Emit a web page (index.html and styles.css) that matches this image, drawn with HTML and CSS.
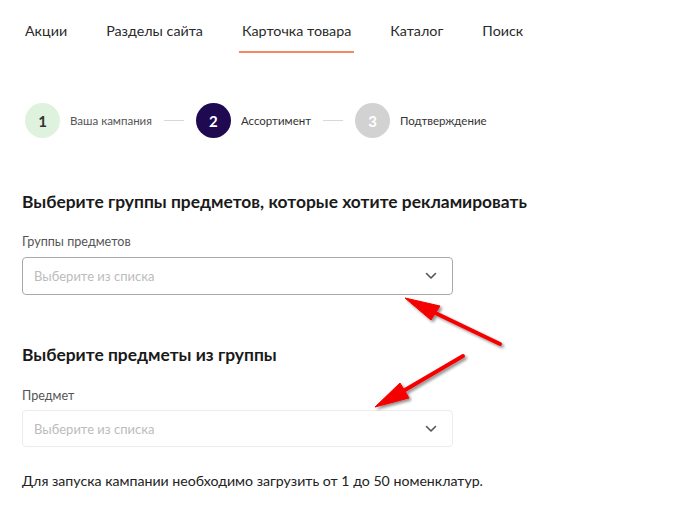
FILE: index.html
```html
<!DOCTYPE html>
<html lang="ru">
<head>
<meta charset="utf-8">
<link rel="stylesheet" href="styles.css">
</head>
<body>
<div class="page">
  <nav class="tabs">
    <span class="tab">Акции</span>
    <span class="tab">Разделы сайта</span>
    <span class="tab active">Карточка товара</span>
    <span class="tab">Каталог</span>
    <span class="tab">Поиск</span>
  </nav>

  <div class="steps">
    <div class="step">
      <span class="circle c1">1</span>
      <span class="step-label">Ваша кампания</span>
    </div>
    <span class="sep"></span>
    <div class="step">
      <span class="circle c2">2</span>
      <span class="step-label">Ассортимент</span>
    </div>
    <span class="sep"></span>
    <div class="step">
      <span class="circle c3">3</span>
      <span class="step-label">Подтверждение</span>
    </div>
  </div>

  <h2 class="title t1">Выберите группы предметов, которые хотите рекламировать</h2>
  <div class="label l1">Группы предметов</div>
  <div class="select">
    <span class="ph">Выберите из списка</span>
    <svg class="chev" width="12" height="8" viewBox="0 0 12 8"><path d="M1.5 1.5 L6 6 L10.5 1.5" fill="none" stroke="#555" stroke-width="1.6" stroke-linecap="round" stroke-linejoin="round"/></svg>
  </div>

  <h2 class="title t2">Выберите предметы из группы</h2>
  <div class="label l2">Предмет</div>
  <div class="select faint">
    <span class="ph">Выберите из списка</span>
    <svg class="chev" width="12" height="8" viewBox="0 0 12 8"><path d="M1.5 1.5 L6 6 L10.5 1.5" fill="none" stroke="#555" stroke-width="1.6" stroke-linecap="round" stroke-linejoin="round"/></svg>
  </div>

  <p class="note">Для запуска кампании необходимо загрузить от 1 до 50 номенклатур.</p>

  <svg class="arrows" width="700" height="524" viewBox="0 0 700 524">
    <defs>
      <filter id="sh" x="-20%" y="-20%" width="140%" height="140%">
        <feGaussianBlur in="SourceAlpha" stdDeviation="1.5"/>
        <feOffset dx="1.5" dy="2" result="b"/>
        <feComponentTransfer><feFuncA type="linear" slope="0.45"/></feComponentTransfer>
        <feMerge><feMergeNode/><feMergeNode in="SourceGraphic"/></feMerge>
      </filter>
    </defs>
    <g filter="url(#sh)" fill="#f40000" stroke="#f40000">
      <line x1="500" y1="344" x2="425" y2="308" stroke-width="4" stroke-linecap="round"/>
      <polygon points="405,298 440,306 431,320" stroke-width="1" stroke-linejoin="round"/>
      <line x1="463" y1="356" x2="393" y2="397" stroke-width="4" stroke-linecap="round"/>
      <polygon points="375,407 400,383 409,398" stroke-width="1" stroke-linejoin="round"/>
    </g>
  </svg>
</div>
</body>
</html>
```
FILE: styles.css
```css
html, body {
  margin: 0;
  padding: 0;
  background: #fff;
}
body {
  font-family: Lato, "Open Sans", "Liberation Sans", sans-serif;
  color: #222;
}
.page {
  position: relative;
  width: 700px;
  height: 524px;
  overflow: hidden;
  padding: 0 0 0 22px;
  box-sizing: border-box;
}
.tabs {
  display: flex;
  gap: 33px;
  height: 54px;
  padding-top: 20px;
  box-sizing: border-box;
}
.tab {
  font-size: 14.3px;
  color: #2a2a2a;
  padding: 0 3px;
  height: 34px;
  box-sizing: border-box;
  line-height: 22px;
}
.tab.active {
  border-bottom: 2px solid #ef8a64;
  height: 33px;
}
.steps {
  display: flex;
  align-items: center;
  margin-top: 49px;
  height: 35px;
  padding-left: 3px;
}
.step {
  display: flex;
  align-items: center;
}
.circle {
  width: 35px;
  height: 35px;
  border-radius: 50%;
  display: flex;
  align-items: center;
  justify-content: center;
  font-weight: 700;
  font-size: 15px;
}
.c1 { background: #def2de; color: #333; }
.c2 { background: #1f0a52; color: #fff; }
.c3 { background: #d2d2d2; color: #fff; }
.step-label {
  font-size: 11.5px;
  color: #555;
  margin-left: 10px;
}
.step:nth-child(3) .step-label { color: #333; }
.step:nth-child(5) .step-label { color: #333; }
.sep {
  width: 20px;
  height: 1px;
  background: #d8d8d8;
  margin: 0 12px 0 12px;
}
.title {
  font-size: 17.4px;
  font-weight: 700;
  color: #1a1a1a;
  margin: 0;
  line-height: 22px;
}
.t1 { margin-top: 53px; }
.t2 { margin-top: 49px; }
.label {
  font-size: 12.6px;
  color: #555;
  line-height: 16px;
}
.l1 { margin-top: 21px; }
.l2 { margin-top: 22px; }
.select {
  margin-top: 7px;
  width: 431px;
  height: 38px;
  box-sizing: border-box;
  border: 1px solid #a9a9a9;
  border-radius: 4px;
  display: flex;
  align-items: center;
  justify-content: space-between;
  padding: 0 15px 0 11px;
}
.select.faint {
  border-color: #ececec;
  height: 37px;
  margin-top: 6px;
}
.ph {
  font-size: 13px;
  color: #bcbcbc;
}
.chev { display: block; }
.note {
  font-size: 14.15px;
  color: #222;
  margin: 25px 0 0 0;
  line-height: 17px;
}
.arrows {
  position: absolute;
  left: 0;
  top: 0;
  pointer-events: none;
}
```
